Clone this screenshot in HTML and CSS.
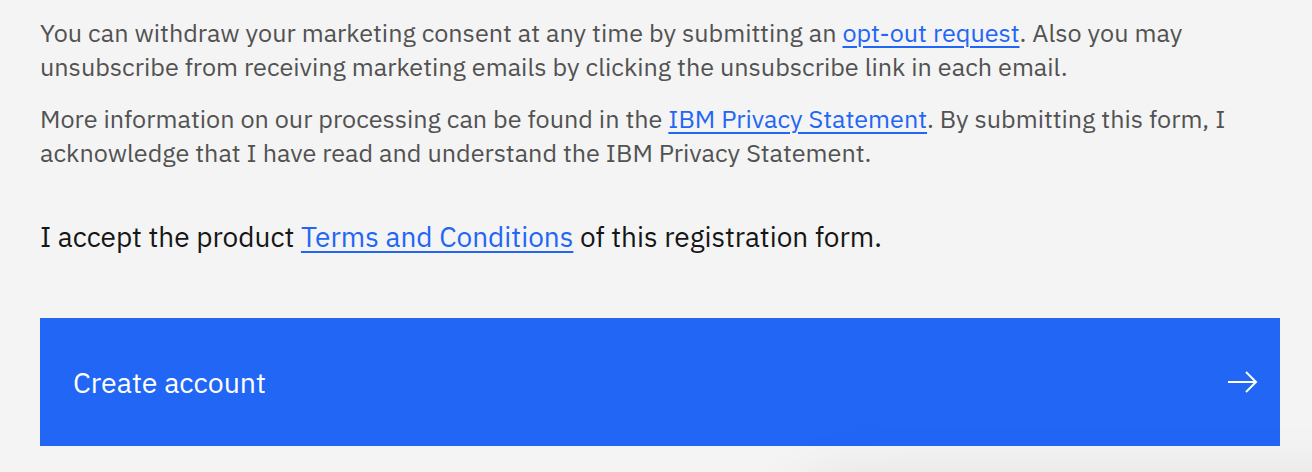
FILE: index.html
```html
<!DOCTYPE html>
<html lang="en">
<head>
    <meta charset="UTF-8">
    <meta name="viewport" content="width=device-width, initial-scale=1.0">
    <title>Create account</title>
    <link rel="stylesheet" href="styles.css">
</head>
<body>

    <div class="form-footer">
        <p class="notice">You can withdraw your marketing consent at any time by submitting an <a href="#">opt-out request</a>. Also you may unsubscribe from receiving marketing emails by clicking the unsubscribe link in each email.</p>

        <p class="notice">More information on our processing can be found in the <a href="#">IBM Privacy Statement</a>. By submitting this form, I acknowledge that I have read and understand the IBM Privacy Statement.</p>

        <p class="terms">I accept the product <a href="#">Terms and Conditions</a> of this registration form.</p>

        <button type="submit" class="submit">
            <span>Create account</span>
            <svg class="arrow" width="32" height="32" viewBox="0 0 32 32" aria-hidden="true">
                <path d="M2 16h27M20 6l10 10-10 10" fill="none" stroke="#fff" stroke-width="2"/>
            </svg>
        </button>
    </div>

    <div class="chat-shadow"></div>

</body>
</html>
```

FILE: styles.css
```css
body {
    margin: 0;
    background-color: #f4f4f4;
    font-family: "IBM Plex Sans", "Noto Sans", sans-serif;
    overflow: hidden;
}

.form-footer {
    padding: 16px 32px 26px 40px;
}

.notice {
    margin: 0 0 18px;
    font-size: 25.2px;
    line-height: 34px;
    color: #525252;
}

.terms {
    margin: 50px 0 0;
    font-size: 28px;
    line-height: 34px;
    color: #161616;
}

a {
    color: #2266f6;
    text-decoration: underline;
    text-decoration-thickness: 2px;
    text-underline-offset: 4px;
}

.submit {
    display: flex;
    align-items: center;
    justify-content: space-between;
    width: 100%;
    height: 128px;
    margin-top: 64px;
    padding: 0 22px 0 33px;
    border: none;
    background-color: #2266f6;
    color: #fff;
    font-family: inherit;
    font-size: 28.5px;
    cursor: pointer;
}

/* shadow of the floating panel just below the fold */
.chat-shadow {
    position: fixed;
    left: 800px;
    top: 495px;
    width: 620px;
    height: 120px;
    border-radius: 40px;
    background-color: #f4f4f4;
    box-shadow: 0 0 70px rgba(0, 0, 0, 0.15);
}
```
